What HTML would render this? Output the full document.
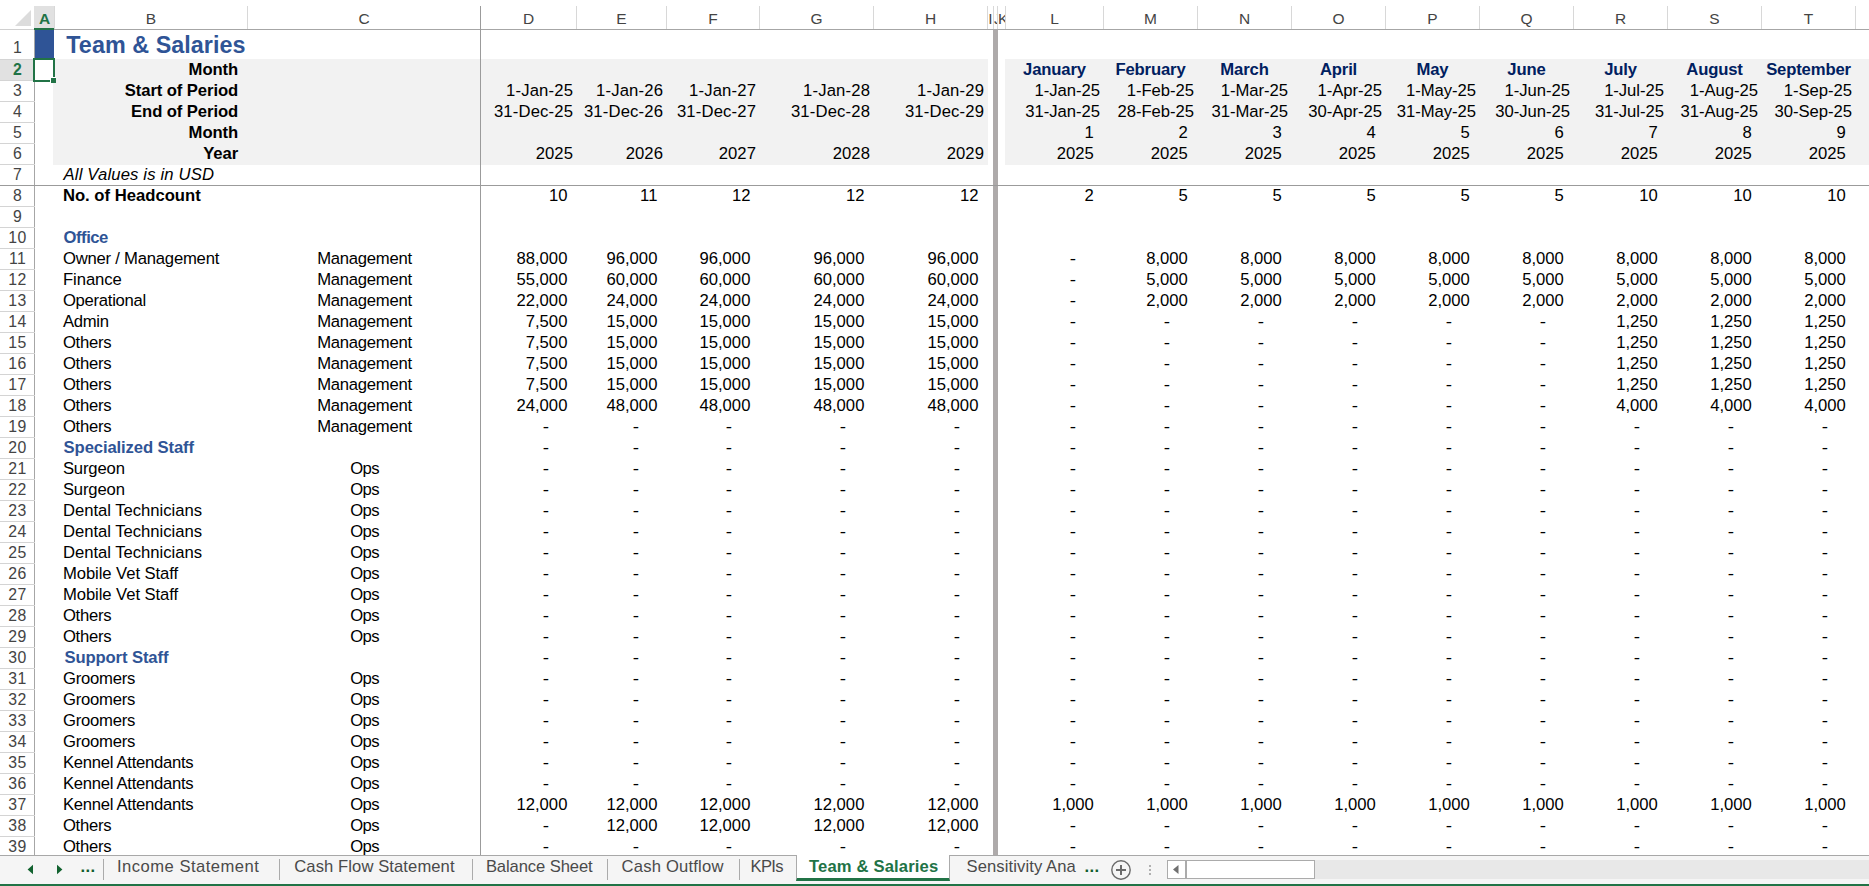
<!DOCTYPE html><html lang="en"><head><meta charset="utf-8"><title>Team &amp; Salaries</title><style>
*{box-sizing:border-box;margin:0;padding:0}
html,body{width:1869px;height:886px;overflow:hidden;background:#fff}
body{position:relative;font-family:"Liberation Sans",sans-serif;font-size:16.67px;color:#000}
.abs,.c,.hd,.rn,.r{position:absolute}
.r{left:0;width:1869px;height:21px}
.c{top:0;height:21px;line-height:21px;white-space:nowrap;overflow:visible;margin-top:var(--dy)}
body{--dy:-1px}
.b{font-weight:bold}
.i{font-style:italic;letter-spacing:.15px;padding-left:8.6px!important}
.bl{color:#2f5496}
.nv{color:#002060}
.hd{top:6px;height:23px;line-height:26px;text-align:center;font-size:15.5px;color:#444;border-right:1px solid #d8d8d8}
.rn{left:0;width:35px;text-align:center;font-size:15.8px;letter-spacing:.4px;color:#444;height:21px;line-height:21px;border-bottom:1px solid #d4d4d4}
.tab{position:absolute;top:856px;height:27px;line-height:22px;font-size:16.6px;color:#4a4a4a;white-space:nowrap}
.sep{position:absolute;top:859px;width:1px;height:21px;background:#ababab}
.RH{left:0px;width:35px}
.A{left:35px;width:20px}
.B{left:55px;width:193px}
.C{left:248px;width:233px}
.D{left:481px;width:96px}
.E{left:577px;width:90px}
.F{left:667px;width:93px}
.G{left:760px;width:114px}
.H{left:874px;width:114px}
.I{left:988px;width:6px}
.J{left:994px;width:4px}
.K{left:998px;width:8px}
.L{left:1006px;width:98px}
.M{left:1104px;width:94px}
.N{left:1198px;width:94px}
.O{left:1292px;width:94px}
.P{left:1386px;width:94px}
.Q{left:1480px;width:94px}
.R{left:1574px;width:94px}
.S{left:1668px;width:94px}
.T{left:1762px;width:94px}
.U{left:1856px;width:54px}

.ra{text-align:right;padding-right:4.1px}
.rb{text-align:right;padding-right:10.2px}
.rd{text-align:right;padding-right:28.4px;transform:scaleX(1.13);transform-origin:calc(100% - 31px) 50%}
.ce{text-align:center}
.lb{text-align:right;padding-right:9.95px;letter-spacing:-.1px}
.la{text-align:left;padding-left:7.9px;letter-spacing:-.22px}
.C{letter-spacing:-.25px}
.dt{letter-spacing:.15px;padding-right:3.95px}
.dm{letter-spacing:-.05px;padding-right:4.1px}
.mn{letter-spacing:-.15px;padding-right:1px}
.nb{letter-spacing:0}
.rb.y{padding-right:9.6px}
.la.i{letter-spacing:.15px}
.la.bl{letter-spacing:-.12px}
</style></head><body>
<div class="abs" style="left:35px;top:30px;width:19px;height:29px;background:#2f5496"></div>
<div class="abs" style="left:53px;top:59px;width:935px;height:106px;background:#f2f2f2"></div>
<div class="abs" style="left:1005px;top:59px;width:864px;height:106px;background:#f2f2f2"></div>
<div class="abs" style="left:993px;top:30px;width:5px;height:826px;background:#aeaaaa"></div>
<div class="abs" style="left:34px;top:6px;width:20px;height:23px;background:#e1e1e1"></div>
<div class="hd" style="left:35px;width:20px;color:#217346;font-weight:bold;">A</div>
<div class="hd" style="left:55px;width:193px;">B</div>
<div class="hd" style="left:248px;width:233px;">C</div>
<div class="hd" style="left:481px;width:96px;">D</div>
<div class="hd" style="left:577px;width:90px;">E</div>
<div class="hd" style="left:667px;width:93px;">F</div>
<div class="hd" style="left:760px;width:114px;">G</div>
<div class="hd" style="left:874px;width:114px;">H</div>
<div class="hd" style="left:988px;width:6px;overflow:hidden;">I</div>
<div class="hd" style="left:994px;width:4px;overflow:hidden;">J</div>
<div class="hd" style="left:998px;width:8px;overflow:hidden;">K</div>
<div class="hd" style="left:1006px;width:98px;">L</div>
<div class="hd" style="left:1104px;width:94px;">M</div>
<div class="hd" style="left:1198px;width:94px;">N</div>
<div class="hd" style="left:1292px;width:94px;">O</div>
<div class="hd" style="left:1386px;width:94px;">P</div>
<div class="hd" style="left:1480px;width:94px;">Q</div>
<div class="hd" style="left:1574px;width:94px;">R</div>
<div class="hd" style="left:1668px;width:94px;">S</div>
<div class="hd" style="left:1762px;width:94px;">T</div>
<div class="hd" style="left:1856px;width:54px;"></div>
<svg class="abs" style="left:14px;top:9px" width="18" height="18" viewBox="0 0 18 18"><polygon points="17,1 17,17 1,17" fill="#dcdcdc"/></svg>
<div class="abs" style="left:0;top:29px;width:1869px;height:1px;background:#a6a6a6"></div>
<div class="abs" style="left:0;top:29px;width:34px;height:1px;background:#d0d0d0"></div>
<div class="abs" style="left:34px;top:28px;width:20px;height:2px;background:#217346"></div>
<div class="abs" style="left:34px;top:30px;width:1px;height:826px;background:#a6a6a6"></div>
<div class="rn" style="top:30px;height:30px;line-height:35px;">1</div>
<div class="rn" style="top:60px;height:21px;line-height:20px;background:#e1e1e1;color:#217346;font-weight:bold;">2</div>
<div class="rn" style="top:81px;height:21px;line-height:20px;">3</div>
<div class="rn" style="top:102px;height:21px;line-height:20px;">4</div>
<div class="rn" style="top:123px;height:21px;line-height:20px;">5</div>
<div class="rn" style="top:144px;height:21px;line-height:20px;">6</div>
<div class="rn" style="top:165px;height:21px;line-height:20px;">7</div>
<div class="rn" style="top:186px;height:21px;line-height:20px;">8</div>
<div class="rn" style="top:207px;height:21px;line-height:20px;">9</div>
<div class="rn" style="top:228px;height:21px;line-height:20px;">10</div>
<div class="rn" style="top:249px;height:21px;line-height:20px;">11</div>
<div class="rn" style="top:270px;height:21px;line-height:20px;">12</div>
<div class="rn" style="top:291px;height:21px;line-height:20px;">13</div>
<div class="rn" style="top:312px;height:21px;line-height:20px;">14</div>
<div class="rn" style="top:333px;height:21px;line-height:20px;">15</div>
<div class="rn" style="top:354px;height:21px;line-height:20px;">16</div>
<div class="rn" style="top:375px;height:21px;line-height:20px;">17</div>
<div class="rn" style="top:396px;height:21px;line-height:20px;">18</div>
<div class="rn" style="top:417px;height:21px;line-height:20px;">19</div>
<div class="rn" style="top:438px;height:21px;line-height:20px;">20</div>
<div class="rn" style="top:459px;height:21px;line-height:20px;">21</div>
<div class="rn" style="top:480px;height:21px;line-height:20px;">22</div>
<div class="rn" style="top:501px;height:21px;line-height:20px;">23</div>
<div class="rn" style="top:522px;height:21px;line-height:20px;">24</div>
<div class="rn" style="top:543px;height:21px;line-height:20px;">25</div>
<div class="rn" style="top:564px;height:21px;line-height:20px;">26</div>
<div class="rn" style="top:585px;height:21px;line-height:20px;">27</div>
<div class="rn" style="top:606px;height:21px;line-height:20px;">28</div>
<div class="rn" style="top:627px;height:21px;line-height:20px;">29</div>
<div class="rn" style="top:648px;height:21px;line-height:20px;">30</div>
<div class="rn" style="top:669px;height:21px;line-height:20px;">31</div>
<div class="rn" style="top:690px;height:21px;line-height:20px;">32</div>
<div class="rn" style="top:711px;height:21px;line-height:20px;">33</div>
<div class="rn" style="top:732px;height:21px;line-height:20px;">34</div>
<div class="rn" style="top:753px;height:21px;line-height:20px;">35</div>
<div class="rn" style="top:774px;height:21px;line-height:20px;">36</div>
<div class="rn" style="top:795px;height:21px;line-height:20px;">37</div>
<div class="rn" style="top:816px;height:21px;line-height:20px;">38</div>
<div class="rn" style="top:837px;height:21px;line-height:20px;">39</div>
<div class="r" style="top:30px;height:30px"><div class="c B b bl" style="height:30px;line-height:30px;font-size:23.33px;padding-left:11.3px;margin-top:0;letter-spacing:.05px">Team &amp; Salaries</div></div>
<div class="r" style="top:60px"><div class="c B lb b">Month</div><div class="c L ce b nv mn">January</div><div class="c M ce b nv mn">February</div><div class="c N ce b nv mn">March</div><div class="c O ce b nv mn">April</div><div class="c P ce b nv mn">May</div><div class="c Q ce b nv mn">June</div><div class="c R ce b nv mn">July</div><div class="c S ce b nv mn">August</div><div class="c T ce b nv mn">September</div></div>
<div class="r" style="top:81px"><div class="c B lb b">Start of Period</div><div class="c D ra dt">1-Jan-25</div><div class="c E ra dt">1-Jan-26</div><div class="c F ra dt">1-Jan-27</div><div class="c G ra dt">1-Jan-28</div><div class="c H ra dt">1-Jan-29</div><div class="c L ra dm">1-Jan-25</div><div class="c M ra dm">1-Feb-25</div><div class="c N ra dm">1-Mar-25</div><div class="c O ra dm">1-Apr-25</div><div class="c P ra dm">1-May-25</div><div class="c Q ra dm">1-Jun-25</div><div class="c R ra dm">1-Jul-25</div><div class="c S ra dm">1-Aug-25</div><div class="c T ra dm">1-Sep-25</div></div>
<div class="r" style="top:102px"><div class="c B lb b">End of Period</div><div class="c D ra dt">31-Dec-25</div><div class="c E ra dt">31-Dec-26</div><div class="c F ra dt">31-Dec-27</div><div class="c G ra dt">31-Dec-28</div><div class="c H ra dt">31-Dec-29</div><div class="c L ra dm">31-Jan-25</div><div class="c M ra dm">28-Feb-25</div><div class="c N ra dm">31-Mar-25</div><div class="c O ra dm">30-Apr-25</div><div class="c P ra dm">31-May-25</div><div class="c Q ra dm">30-Jun-25</div><div class="c R ra dm">31-Jul-25</div><div class="c S ra dm">31-Aug-25</div><div class="c T ra dm">30-Sep-25</div></div>
<div class="r" style="top:123px"><div class="c B lb b">Month</div><div class="c L rb">1</div><div class="c M rb">2</div><div class="c N rb">3</div><div class="c O rb">4</div><div class="c P rb">5</div><div class="c Q rb">6</div><div class="c R rb">7</div><div class="c S rb">8</div><div class="c T rb">9</div></div>
<div class="r" style="top:144px"><div class="c B lb b">Year</div><div class="c D ra">2025</div><div class="c E ra">2026</div><div class="c F ra">2027</div><div class="c G ra">2028</div><div class="c H ra">2029</div><div class="c L rb">2025</div><div class="c M rb">2025</div><div class="c N rb">2025</div><div class="c O rb">2025</div><div class="c P rb">2025</div><div class="c Q rb">2025</div><div class="c R rb">2025</div><div class="c S rb">2025</div><div class="c T rb">2025</div></div>
<div class="r" style="top:165px"><div class="c B la i">All Values is in USD</div></div>
<div class="r" style="top:186px"><div class="c B la b nb">No. of Headcount</div><div class="c D rb y">10</div><div class="c E rb y">11</div><div class="c F rb y">12</div><div class="c G rb y">12</div><div class="c H rb y">12</div><div class="c L rb">2</div><div class="c M rb">5</div><div class="c N rb">5</div><div class="c O rb">5</div><div class="c P rb">5</div><div class="c Q rb">5</div><div class="c R rb">10</div><div class="c S rb">10</div><div class="c T rb">10</div></div>
<div class="r" style="top:228px"><div class="c B la b bl" style="letter-spacing:-0.5px;padding-left:8.6px;">Office</div></div>
<div class="r" style="top:249px"><div class="c B la" style="letter-spacing:-0.22px;">Owner / Management</div><div class="c C ce">Management</div><div class="c D rb y">88,000</div><div class="c E rb y">96,000</div><div class="c F rb y">96,000</div><div class="c G rb y">96,000</div><div class="c H rb y">96,000</div><div class="c L rd">-</div><div class="c M rb">8,000</div><div class="c N rb">8,000</div><div class="c O rb">8,000</div><div class="c P rb">8,000</div><div class="c Q rb">8,000</div><div class="c R rb">8,000</div><div class="c S rb">8,000</div><div class="c T rb">8,000</div></div>
<div class="r" style="top:270px"><div class="c B la" style="letter-spacing:-0.05px;">Finance</div><div class="c C ce">Management</div><div class="c D rb y">55,000</div><div class="c E rb y">60,000</div><div class="c F rb y">60,000</div><div class="c G rb y">60,000</div><div class="c H rb y">60,000</div><div class="c L rd">-</div><div class="c M rb">5,000</div><div class="c N rb">5,000</div><div class="c O rb">5,000</div><div class="c P rb">5,000</div><div class="c Q rb">5,000</div><div class="c R rb">5,000</div><div class="c S rb">5,000</div><div class="c T rb">5,000</div></div>
<div class="r" style="top:291px"><div class="c B la" style="letter-spacing:-0.27px;">Operational</div><div class="c C ce">Management</div><div class="c D rb y">22,000</div><div class="c E rb y">24,000</div><div class="c F rb y">24,000</div><div class="c G rb y">24,000</div><div class="c H rb y">24,000</div><div class="c L rd">-</div><div class="c M rb">2,000</div><div class="c N rb">2,000</div><div class="c O rb">2,000</div><div class="c P rb">2,000</div><div class="c Q rb">2,000</div><div class="c R rb">2,000</div><div class="c S rb">2,000</div><div class="c T rb">2,000</div></div>
<div class="r" style="top:312px"><div class="c B la" style="letter-spacing:-0.26px;">Admin</div><div class="c C ce">Management</div><div class="c D rb y">7,500</div><div class="c E rb y">15,000</div><div class="c F rb y">15,000</div><div class="c G rb y">15,000</div><div class="c H rb y">15,000</div><div class="c L rd">-</div><div class="c M rd">-</div><div class="c N rd">-</div><div class="c O rd">-</div><div class="c P rd">-</div><div class="c Q rd">-</div><div class="c R rb">1,250</div><div class="c S rb">1,250</div><div class="c T rb">1,250</div></div>
<div class="r" style="top:333px"><div class="c B la" style="letter-spacing:-0.25px;">Others</div><div class="c C ce">Management</div><div class="c D rb y">7,500</div><div class="c E rb y">15,000</div><div class="c F rb y">15,000</div><div class="c G rb y">15,000</div><div class="c H rb y">15,000</div><div class="c L rd">-</div><div class="c M rd">-</div><div class="c N rd">-</div><div class="c O rd">-</div><div class="c P rd">-</div><div class="c Q rd">-</div><div class="c R rb">1,250</div><div class="c S rb">1,250</div><div class="c T rb">1,250</div></div>
<div class="r" style="top:354px"><div class="c B la" style="letter-spacing:-0.25px;">Others</div><div class="c C ce">Management</div><div class="c D rb y">7,500</div><div class="c E rb y">15,000</div><div class="c F rb y">15,000</div><div class="c G rb y">15,000</div><div class="c H rb y">15,000</div><div class="c L rd">-</div><div class="c M rd">-</div><div class="c N rd">-</div><div class="c O rd">-</div><div class="c P rd">-</div><div class="c Q rd">-</div><div class="c R rb">1,250</div><div class="c S rb">1,250</div><div class="c T rb">1,250</div></div>
<div class="r" style="top:375px"><div class="c B la" style="letter-spacing:-0.25px;">Others</div><div class="c C ce">Management</div><div class="c D rb y">7,500</div><div class="c E rb y">15,000</div><div class="c F rb y">15,000</div><div class="c G rb y">15,000</div><div class="c H rb y">15,000</div><div class="c L rd">-</div><div class="c M rd">-</div><div class="c N rd">-</div><div class="c O rd">-</div><div class="c P rd">-</div><div class="c Q rd">-</div><div class="c R rb">1,250</div><div class="c S rb">1,250</div><div class="c T rb">1,250</div></div>
<div class="r" style="top:396px"><div class="c B la" style="letter-spacing:-0.25px;">Others</div><div class="c C ce">Management</div><div class="c D rb y">24,000</div><div class="c E rb y">48,000</div><div class="c F rb y">48,000</div><div class="c G rb y">48,000</div><div class="c H rb y">48,000</div><div class="c L rd">-</div><div class="c M rd">-</div><div class="c N rd">-</div><div class="c O rd">-</div><div class="c P rd">-</div><div class="c Q rd">-</div><div class="c R rb">4,000</div><div class="c S rb">4,000</div><div class="c T rb">4,000</div></div>
<div class="r" style="top:417px"><div class="c B la" style="letter-spacing:-0.25px;">Others</div><div class="c C ce">Management</div><div class="c D rd">-</div><div class="c E rd">-</div><div class="c F rd">-</div><div class="c G rd">-</div><div class="c H rd">-</div><div class="c L rd">-</div><div class="c M rd">-</div><div class="c N rd">-</div><div class="c O rd">-</div><div class="c P rd">-</div><div class="c Q rd">-</div><div class="c R rd">-</div><div class="c S rd">-</div><div class="c T rd">-</div></div>
<div class="r" style="top:438px"><div class="c B la b bl" style="padding-left:8.6px;">Specialized Staff</div><div class="c D rd">-</div><div class="c E rd">-</div><div class="c F rd">-</div><div class="c G rd">-</div><div class="c H rd">-</div><div class="c L rd">-</div><div class="c M rd">-</div><div class="c N rd">-</div><div class="c O rd">-</div><div class="c P rd">-</div><div class="c Q rd">-</div><div class="c R rd">-</div><div class="c S rd">-</div><div class="c T rd">-</div></div>
<div class="r" style="top:459px"><div class="c B la" style="letter-spacing:-0.15px;">Surgeon</div><div class="c C ce" style="letter-spacing:-0.6px;">Ops</div><div class="c D rd">-</div><div class="c E rd">-</div><div class="c F rd">-</div><div class="c G rd">-</div><div class="c H rd">-</div><div class="c L rd">-</div><div class="c M rd">-</div><div class="c N rd">-</div><div class="c O rd">-</div><div class="c P rd">-</div><div class="c Q rd">-</div><div class="c R rd">-</div><div class="c S rd">-</div><div class="c T rd">-</div></div>
<div class="r" style="top:480px"><div class="c B la" style="letter-spacing:-0.15px;">Surgeon</div><div class="c C ce" style="letter-spacing:-0.6px;">Ops</div><div class="c D rd">-</div><div class="c E rd">-</div><div class="c F rd">-</div><div class="c G rd">-</div><div class="c H rd">-</div><div class="c L rd">-</div><div class="c M rd">-</div><div class="c N rd">-</div><div class="c O rd">-</div><div class="c P rd">-</div><div class="c Q rd">-</div><div class="c R rd">-</div><div class="c S rd">-</div><div class="c T rd">-</div></div>
<div class="r" style="top:501px"><div class="c B la" style="letter-spacing:-0.02px;">Dental Technicians</div><div class="c C ce" style="letter-spacing:-0.6px;">Ops</div><div class="c D rd">-</div><div class="c E rd">-</div><div class="c F rd">-</div><div class="c G rd">-</div><div class="c H rd">-</div><div class="c L rd">-</div><div class="c M rd">-</div><div class="c N rd">-</div><div class="c O rd">-</div><div class="c P rd">-</div><div class="c Q rd">-</div><div class="c R rd">-</div><div class="c S rd">-</div><div class="c T rd">-</div></div>
<div class="r" style="top:522px"><div class="c B la" style="letter-spacing:-0.02px;">Dental Technicians</div><div class="c C ce" style="letter-spacing:-0.6px;">Ops</div><div class="c D rd">-</div><div class="c E rd">-</div><div class="c F rd">-</div><div class="c G rd">-</div><div class="c H rd">-</div><div class="c L rd">-</div><div class="c M rd">-</div><div class="c N rd">-</div><div class="c O rd">-</div><div class="c P rd">-</div><div class="c Q rd">-</div><div class="c R rd">-</div><div class="c S rd">-</div><div class="c T rd">-</div></div>
<div class="r" style="top:543px"><div class="c B la" style="letter-spacing:-0.02px;">Dental Technicians</div><div class="c C ce" style="letter-spacing:-0.6px;">Ops</div><div class="c D rd">-</div><div class="c E rd">-</div><div class="c F rd">-</div><div class="c G rd">-</div><div class="c H rd">-</div><div class="c L rd">-</div><div class="c M rd">-</div><div class="c N rd">-</div><div class="c O rd">-</div><div class="c P rd">-</div><div class="c Q rd">-</div><div class="c R rd">-</div><div class="c S rd">-</div><div class="c T rd">-</div></div>
<div class="r" style="top:564px"><div class="c B la" style="letter-spacing:-0.07px;">Mobile Vet Staff</div><div class="c C ce" style="letter-spacing:-0.6px;">Ops</div><div class="c D rd">-</div><div class="c E rd">-</div><div class="c F rd">-</div><div class="c G rd">-</div><div class="c H rd">-</div><div class="c L rd">-</div><div class="c M rd">-</div><div class="c N rd">-</div><div class="c O rd">-</div><div class="c P rd">-</div><div class="c Q rd">-</div><div class="c R rd">-</div><div class="c S rd">-</div><div class="c T rd">-</div></div>
<div class="r" style="top:585px"><div class="c B la" style="letter-spacing:-0.07px;">Mobile Vet Staff</div><div class="c C ce" style="letter-spacing:-0.6px;">Ops</div><div class="c D rd">-</div><div class="c E rd">-</div><div class="c F rd">-</div><div class="c G rd">-</div><div class="c H rd">-</div><div class="c L rd">-</div><div class="c M rd">-</div><div class="c N rd">-</div><div class="c O rd">-</div><div class="c P rd">-</div><div class="c Q rd">-</div><div class="c R rd">-</div><div class="c S rd">-</div><div class="c T rd">-</div></div>
<div class="r" style="top:606px"><div class="c B la" style="letter-spacing:-0.25px;">Others</div><div class="c C ce" style="letter-spacing:-0.6px;">Ops</div><div class="c D rd">-</div><div class="c E rd">-</div><div class="c F rd">-</div><div class="c G rd">-</div><div class="c H rd">-</div><div class="c L rd">-</div><div class="c M rd">-</div><div class="c N rd">-</div><div class="c O rd">-</div><div class="c P rd">-</div><div class="c Q rd">-</div><div class="c R rd">-</div><div class="c S rd">-</div><div class="c T rd">-</div></div>
<div class="r" style="top:627px"><div class="c B la" style="letter-spacing:-0.25px;">Others</div><div class="c C ce" style="letter-spacing:-0.6px;">Ops</div><div class="c D rd">-</div><div class="c E rd">-</div><div class="c F rd">-</div><div class="c G rd">-</div><div class="c H rd">-</div><div class="c L rd">-</div><div class="c M rd">-</div><div class="c N rd">-</div><div class="c O rd">-</div><div class="c P rd">-</div><div class="c Q rd">-</div><div class="c R rd">-</div><div class="c S rd">-</div><div class="c T rd">-</div></div>
<div class="r" style="top:648px"><div class="c B la b bl" style="padding-left:9.4px;">Support Staff</div><div class="c D rd">-</div><div class="c E rd">-</div><div class="c F rd">-</div><div class="c G rd">-</div><div class="c H rd">-</div><div class="c L rd">-</div><div class="c M rd">-</div><div class="c N rd">-</div><div class="c O rd">-</div><div class="c P rd">-</div><div class="c Q rd">-</div><div class="c R rd">-</div><div class="c S rd">-</div><div class="c T rd">-</div></div>
<div class="r" style="top:669px"><div class="c B la" style="letter-spacing:-0.22px;">Groomers</div><div class="c C ce" style="letter-spacing:-0.6px;">Ops</div><div class="c D rd">-</div><div class="c E rd">-</div><div class="c F rd">-</div><div class="c G rd">-</div><div class="c H rd">-</div><div class="c L rd">-</div><div class="c M rd">-</div><div class="c N rd">-</div><div class="c O rd">-</div><div class="c P rd">-</div><div class="c Q rd">-</div><div class="c R rd">-</div><div class="c S rd">-</div><div class="c T rd">-</div></div>
<div class="r" style="top:690px"><div class="c B la" style="letter-spacing:-0.22px;">Groomers</div><div class="c C ce" style="letter-spacing:-0.6px;">Ops</div><div class="c D rd">-</div><div class="c E rd">-</div><div class="c F rd">-</div><div class="c G rd">-</div><div class="c H rd">-</div><div class="c L rd">-</div><div class="c M rd">-</div><div class="c N rd">-</div><div class="c O rd">-</div><div class="c P rd">-</div><div class="c Q rd">-</div><div class="c R rd">-</div><div class="c S rd">-</div><div class="c T rd">-</div></div>
<div class="r" style="top:711px"><div class="c B la" style="letter-spacing:-0.22px;">Groomers</div><div class="c C ce" style="letter-spacing:-0.6px;">Ops</div><div class="c D rd">-</div><div class="c E rd">-</div><div class="c F rd">-</div><div class="c G rd">-</div><div class="c H rd">-</div><div class="c L rd">-</div><div class="c M rd">-</div><div class="c N rd">-</div><div class="c O rd">-</div><div class="c P rd">-</div><div class="c Q rd">-</div><div class="c R rd">-</div><div class="c S rd">-</div><div class="c T rd">-</div></div>
<div class="r" style="top:732px"><div class="c B la" style="letter-spacing:-0.22px;">Groomers</div><div class="c C ce" style="letter-spacing:-0.6px;">Ops</div><div class="c D rd">-</div><div class="c E rd">-</div><div class="c F rd">-</div><div class="c G rd">-</div><div class="c H rd">-</div><div class="c L rd">-</div><div class="c M rd">-</div><div class="c N rd">-</div><div class="c O rd">-</div><div class="c P rd">-</div><div class="c Q rd">-</div><div class="c R rd">-</div><div class="c S rd">-</div><div class="c T rd">-</div></div>
<div class="r" style="top:753px"><div class="c B la" style="letter-spacing:-0.28px;">Kennel Attendants</div><div class="c C ce" style="letter-spacing:-0.6px;">Ops</div><div class="c D rd">-</div><div class="c E rd">-</div><div class="c F rd">-</div><div class="c G rd">-</div><div class="c H rd">-</div><div class="c L rd">-</div><div class="c M rd">-</div><div class="c N rd">-</div><div class="c O rd">-</div><div class="c P rd">-</div><div class="c Q rd">-</div><div class="c R rd">-</div><div class="c S rd">-</div><div class="c T rd">-</div></div>
<div class="r" style="top:774px"><div class="c B la" style="letter-spacing:-0.28px;">Kennel Attendants</div><div class="c C ce" style="letter-spacing:-0.6px;">Ops</div><div class="c D rd">-</div><div class="c E rd">-</div><div class="c F rd">-</div><div class="c G rd">-</div><div class="c H rd">-</div><div class="c L rd">-</div><div class="c M rd">-</div><div class="c N rd">-</div><div class="c O rd">-</div><div class="c P rd">-</div><div class="c Q rd">-</div><div class="c R rd">-</div><div class="c S rd">-</div><div class="c T rd">-</div></div>
<div class="r" style="top:795px"><div class="c B la" style="letter-spacing:-0.28px;">Kennel Attendants</div><div class="c C ce" style="letter-spacing:-0.6px;">Ops</div><div class="c D rb y">12,000</div><div class="c E rb y">12,000</div><div class="c F rb y">12,000</div><div class="c G rb y">12,000</div><div class="c H rb y">12,000</div><div class="c L rb">1,000</div><div class="c M rb">1,000</div><div class="c N rb">1,000</div><div class="c O rb">1,000</div><div class="c P rb">1,000</div><div class="c Q rb">1,000</div><div class="c R rb">1,000</div><div class="c S rb">1,000</div><div class="c T rb">1,000</div></div>
<div class="r" style="top:816px"><div class="c B la" style="letter-spacing:-0.25px;">Others</div><div class="c C ce" style="letter-spacing:-0.6px;">Ops</div><div class="c D rd">-</div><div class="c E rb y">12,000</div><div class="c F rb y">12,000</div><div class="c G rb y">12,000</div><div class="c H rb y">12,000</div><div class="c L rd">-</div><div class="c M rd">-</div><div class="c N rd">-</div><div class="c O rd">-</div><div class="c P rd">-</div><div class="c Q rd">-</div><div class="c R rd">-</div><div class="c S rd">-</div><div class="c T rd">-</div></div>
<div class="r" style="top:837px"><div class="c B la" style="letter-spacing:-0.25px;">Others</div><div class="c C ce" style="letter-spacing:-0.6px;">Ops</div><div class="c D rd">-</div><div class="c E rd">-</div><div class="c F rd">-</div><div class="c G rd">-</div><div class="c H rd">-</div><div class="c L rd">-</div><div class="c M rd">-</div><div class="c N rd">-</div><div class="c O rd">-</div><div class="c P rd">-</div><div class="c Q rd">-</div><div class="c R rd">-</div><div class="c S rd">-</div><div class="c T rd">-</div></div>
<div class="abs" style="left:480px;top:6px;width:1px;height:850px;background:#9b9b9b"></div>
<div class="abs" style="left:0;top:185px;width:1869px;height:1px;background:#9b9b9b"></div>
<div class="abs" style="left:33px;top:58px;width:22px;height:24px;border:2px solid #217346;background:#fff"></div>
<div class="abs" style="left:50px;top:77px;width:5px;height:5px;background:#217346;border-left:1px solid #fff;border-top:1px solid #fff;box-sizing:content-box"></div>
<div class="abs" style="left:0;top:855px;width:1869px;height:31px;background:#f5f5f5;border-top:1px solid #a8a8a8"></div>
<div class="abs" style="left:1315px;top:860px;width:554px;height:19px;background:#e8e8e8"></div>
<div class="abs" style="left:0;top:884px;width:1869px;height:2px;background:#217346"></div>
<svg class="abs" style="left:26px;top:863px" width="40" height="14" viewBox="0 0 40 14"><polygon points="7,1.8 7,11.3 1.6,6.55" fill="#12622f"/><polygon points="31,1.8 31,11.3 36.4,6.55" fill="#12622f"/></svg>
<div class="tab" style="left:80.6px;color:#0e5c2f;font-weight:bold;letter-spacing:.4px">...</div>
<div class="tab" style="left:117px;letter-spacing:0.48px">Income Statement</div>
<div class="tab" style="left:294.3px;letter-spacing:0.09px">Cash Flow Statement</div>
<div class="tab" style="left:485.9px;letter-spacing:-0.1px">Balance Sheet</div>
<div class="tab" style="left:621.5px;letter-spacing:0.21px">Cash Outflow</div>
<div class="tab" style="left:750.6px;letter-spacing:-0.7px">KPIs</div>
<div class="sep" style="left:103px"></div>
<div class="sep" style="left:279px"></div>
<div class="sep" style="left:472px"></div>
<div class="sep" style="left:607px"></div>
<div class="sep" style="left:739px"></div>
<div class="abs" style="left:796px;top:855px;width:154px;height:26px;background:#fff;border-left:1px solid #ababab;border-right:1px solid #ababab;border-bottom:3px solid #217346"></div>
<div class="tab" style="left:809px;color:#217346;font-weight:bold;letter-spacing:.16px">Team &amp; Salaries</div>
<div class="tab" style="left:966.5px;letter-spacing:.1px">Sensitivity Ana</div>
<div class="tab" style="left:1084.4px;color:#0e5c2f;font-weight:bold;letter-spacing:.4px">...</div>
<svg class="abs" style="left:1110px;top:859px" width="22" height="22" viewBox="0 0 22 22"><circle cx="11" cy="11" r="9.2" fill="none" stroke="#6a6a6a" stroke-width="1.4"/><path d="M6 11H16M11 6V16" stroke="#6a6a6a" stroke-width="2"/></svg>
<svg class="abs" style="left:1148px;top:864px" width="4" height="12" viewBox="0 0 4 12"><rect x="1" y="1" width="2" height="2" fill="#b0b0b0"/><rect x="1" y="5" width="2" height="2" fill="#b0b0b0"/><rect x="1" y="9" width="2" height="2" fill="#b0b0b0"/></svg>
<div class="abs" style="left:1167px;top:860px;width:19px;height:19px;background:#fff;border:1px solid #ababab"></div>
<svg class="abs" style="left:1172px;top:864px" width="8" height="11" viewBox="0 0 8 11"><polygon points="6.5,1 6.5,10 1,5.5" fill="#707070"/></svg>
<div class="abs" style="left:1186px;top:860px;width:129px;height:19px;background:#fff;border:1px solid #ababab"></div>
</body></html>
